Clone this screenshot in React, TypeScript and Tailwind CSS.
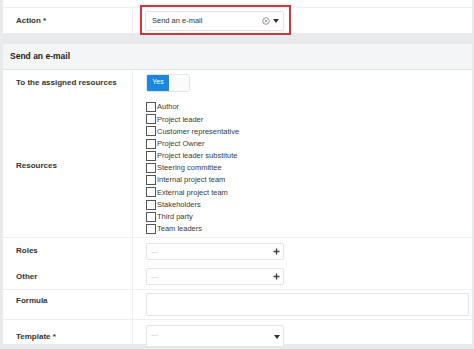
import React from 'react';

const resources = [
  'Author',
  'Project leader',
  'Customer representative',
  'Project Owner',
  'Project leader substitute',
  'Steering committee',
  'Internal project team',
  'External project team',
  'Stakeholders',
  'Third party',
  'Team leaders',
];

const Plus = () => (
  <svg width="7" height="7" viewBox="0 0 7 7" className="shrink-0">
    <path d="M3.5 0.5v6M0.5 3.5h6" stroke="#444" strokeWidth="1.4" />
  </svg>
);

const Caret = () => (
  <svg width="6" height="4" viewBox="0 0 6 4" className="shrink-0">
    <path d="M0 0h6L3 4z" fill="#333" />
  </svg>
);

const Clear = () => (
  <svg width="8" height="8" viewBox="0 0 8 8" className="shrink-0">
    <circle cx="4" cy="4" r="3.3" fill="none" stroke="#9a9a9a" strokeWidth="1" />
    <path d="M2.6 2.6l2.8 2.8M5.4 2.6l-2.8 2.8" stroke="#9a9a9a" strokeWidth="0.9" />
  </svg>
);

const Field = ({ icon }: { icon: 'plus' | 'caret' }) => (
  <div className="flex h-[17px] w-[138px] items-center justify-between rounded-[2px] border border-[#e3e4e6] bg-white pl-[4px] pr-[3px]">
    <span className="text-[7px] leading-none text-[#c4c4c4]">---</span>
    {icon === 'plus' ? <Plus /> : <Caret />}
  </div>
);

const Label = ({ children, pad }: { children: React.ReactNode; pad?: string }) => (
  <div
    className={`flex w-[130px] shrink-0 border-r border-[#eeeff1] pl-[13px] text-[8px] font-bold text-[#333] ${
      pad ? `items-start ${pad}` : 'items-center'
    }`}
  >
    {children}
  </div>
);

export default function App() {
  return (
    <div
      className="flex h-[349px] w-[474px] flex-col overflow-hidden bg-[#e9eaec] pl-[3px] pr-[2px]"
      style={{ fontFamily: '"Liberation Sans", Arial, sans-serif' }}
    >
      {/* action panel */}
      <div className="bg-white pt-[7px]">
        <div className="flex h-[26px] border-t border-[#eeeff1]">
          <Label>Action *</Label>
          <div className="relative flex flex-1 items-center pl-[12px]">
            <div className="flex h-[20px] w-[139px] items-center justify-between rounded-[2px] border border-[#e3e4e6] bg-white pl-[6px] pr-[4px]">
              <span className="text-[7.5px] text-[#333]">Send an e-mail</span>
              <div className="flex items-center gap-[3px]">
                <Clear />
                <Caret />
              </div>
            </div>
            <div className="pointer-events-none absolute left-[7px] top-[-3px] h-[30px] w-[151px] border-2 border-[#d7333f]" />
          </div>
        </div>
      </div>

      <div className="h-[11px] shrink-0" />

      {/* email panel */}
      <div className="flex flex-1 flex-col bg-white">
        <div className="flex h-[26px] shrink-0 items-center border-b border-[#e2e3e5] bg-[#f4f5f6] pl-[7px] text-[8.5px] font-bold text-[#222]">
          Send an e-mail
        </div>

        <div className="flex h-[25px] shrink-0">
          <Label>To the assigned resources</Label>
          <div className="flex flex-1 items-center pl-[13px]">
            <div className="flex h-[18px] w-[44px] overflow-hidden rounded-[2px] border border-[#e3e4e6]">
              <div className="flex w-[22px] items-center justify-center bg-[#1b87e0] text-[7px] text-white">Yes</div>
              <div className="flex-1 bg-[#fbfbfc]" />
            </div>
          </div>
        </div>

        <div className="flex h-[143px] shrink-0 border-b border-[#eeeff1]">
          <Label>Resources</Label>
          <div className="flex flex-1 flex-col pl-[13px] pt-[6px]">
            {resources.map((r) => (
              <div key={r} className="flex h-[12.2px] items-center">
                <div className="h-[10px] w-[10px] shrink-0 border border-[#555] bg-white" />
                <span className="pl-[1px] text-[7.5px] leading-none text-[#3a3a3a]">{r}</span>
              </div>
            ))}
          </div>
        </div>

        <div className="flex h-[26px] shrink-0">
          <Label>Roles</Label>
          <div className="flex flex-1 items-center pl-[13px]">
            <Field icon="plus" />
          </div>
        </div>
        <div className="flex h-[26px] shrink-0 border-b border-[#eeeff1]">
          <Label>Other</Label>
          <div className="flex flex-1 items-center pl-[13px]">
            <Field icon="plus" />
          </div>
        </div>

        <div className="flex h-[30px] shrink-0 border-b border-[#eeeff1]">
          <Label pad="pt-[5px]">Formula</Label>
          <div className="flex flex-1 items-center pl-[13px] pr-[3px]">
            <div className="h-[23px] flex-1 rounded-[2px] border border-[#e3e4e6] bg-white" />
          </div>
        </div>

        <div className="flex h-[23px] shrink-0">
          <Label pad="pt-[11px]">Template *</Label>
          <div className="flex flex-1 items-start pl-[13px] pt-[5px]">
            <div className="flex h-[22px] w-[138px] items-start justify-between rounded-[2px] border border-[#e3e4e6] bg-white pl-[4px] pr-[3px] pt-[5px]">
              <span className="text-[7px] leading-none text-[#c4c4c4]">---</span>
              <div className="pt-[4px]">
                <Caret />
              </div>
            </div>
          </div>
        </div>
      </div>
      <div className="h-[5px] shrink-0" />
    </div>
  );
}
